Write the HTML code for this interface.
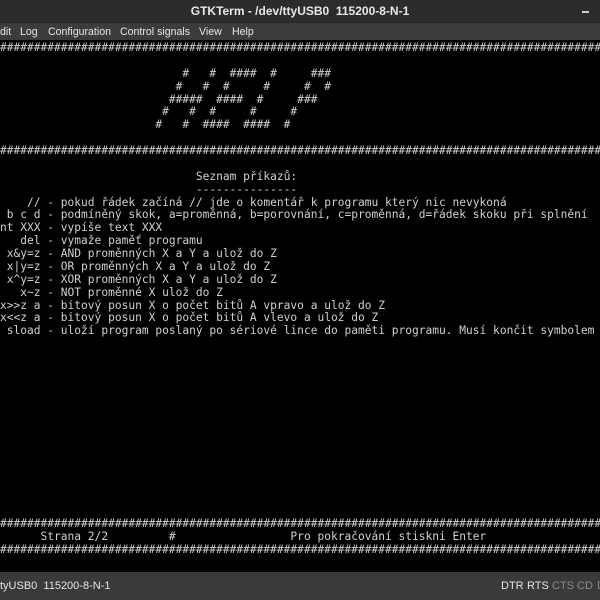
<!DOCTYPE html>
<html><head><meta charset="utf-8"><style>
*{margin:0;padding:0;box-sizing:border-box}
body{width:600px;height:600px;overflow:hidden;background:#000;position:relative;font-family:"Liberation Sans",sans-serif}
#title{position:absolute;left:0;top:0;width:600px;height:22px;background:#2c2c2c;color:#e8e8e8;font-weight:bold;font-size:12px;text-align:center;line-height:22px}
#min{position:absolute;left:582px;top:11px;width:7px;height:2px;background:#ccc}
#menu{position:absolute;left:0;top:22px;width:600px;height:18px;background:#3c3c3c;border-top:1px solid #262626;color:#e6e6e6;font-size:10.6px;line-height:18px;white-space:nowrap}
#menu span{position:absolute;top:0}
#term{position:absolute;left:0;top:40px;width:600px;height:532px;background:#000;overflow:hidden}
pre{position:absolute;left:0;top:2px;font-family:"DejaVu Sans Mono","Liberation Mono",monospace;font-size:11.23px;line-height:12.87px;color:#d0d0d0;white-space:pre}
#status{position:absolute;left:0;top:572px;width:600px;height:28px;background:#3a3a3a;color:#e6e6e6;font-size:11px;line-height:28px;white-space:nowrap}
#status span{position:absolute;top:0}
.dim{color:#8a8a8a}
</style></head><body>
<div id="title">GTKTerm - /dev/ttyUSB0&nbsp; 115200-8-N-1</div>
<div id="min"></div>
<div id="menu"><span style="left:0">dit</span><span style="left:20px">Log</span><span style="left:48px">Configuration</span><span style="left:120px">Control signals</span><span style="left:199px">View</span><span style="left:232px">Help</span></div>
<div id="term"><pre>#########################################################################################

                           #   #  ####  #     ###
                          #   #  #     #     #  #
                         #####  ####  #     ###
                        #   #  #     #     #
                       #   #  ####  ####  #

#########################################################################################

                             Seznam příkazů:
                             ---------------
    // - pokud řádek začíná // jde o komentář k programu který nic nevykoná
 b c d - podmíněný skok, a=proměnná, b=porovnání, c=proměnná, d=řádek skoku při splnění
nt XXX - vypíše text XXX
   del - vymaže paměť programu
 x&amp;y=z - AND proměnných X a Y a ulož do Z
 x|y=z - OR proměnných X a Y a ulož do Z
 x^y=z - XOR proměnných X a Y a ulož do Z
   x~z - NOT proměnné X ulož do Z
x&gt;&gt;z a - bitový posun X o počet bitů A vpravo a ulož do Z
x&lt;&lt;z a - bitový posun X o počet bitů A vlevo a ulož do Z
 sload - uloží program poslaný po sériové lince do paměti programu. Musí končit symbolem














#########################################################################################
      Strana 2/2         #                 Pro pokračování stiskni Enter
#########################################################################################</pre></div>
<div id="status"><span style="left:0">tyUSB0&nbsp; 115200-8-N-1</span><span style="left:501px">DTR</span><span style="left:527px">RTS</span><span class="dim" style="left:552px">CTS</span><span class="dim" style="left:577px">CD</span><span class="dim" style="left:597px">D</span></div>
</body></html>
